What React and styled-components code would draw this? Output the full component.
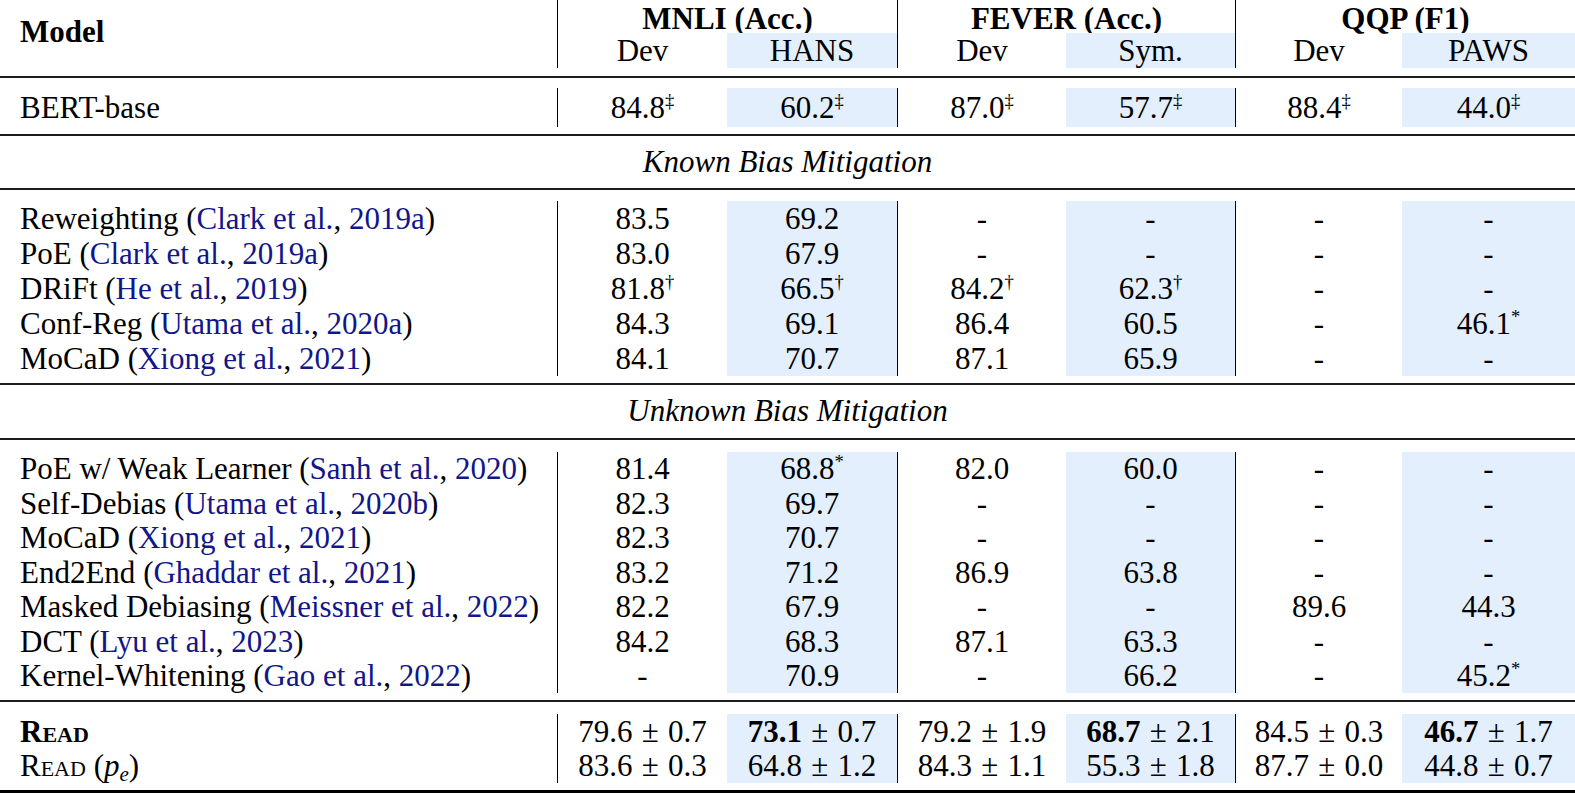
import React from "react";
import styled, { createGlobalStyle } from "styled-components";

const GlobalStyle = createGlobalStyle`
  html, body {
    margin: 0;
    padding: 0;
    background: #ffffff;
  }
  body {
    font-family: "Liberation Serif", "Times New Roman", serif;
    color: #000;
  }
`;

const COLS = "557px 170px 170px 169px 169px 167px 1fr";
const SHADE = "#e3effd";
const CITE = "#11168a";

const Page = styled.div`
  width: 1575px;
  font-size: 31px;
`;

const HeaderGrid = styled.div`
  display: grid;
  grid-template-columns: ${COLS};
  grid-template-rows: 33px 35px;
  margin-bottom: 8px;
`;

const Cell = styled.div`
  display: flex;
  align-items: center;
  justify-content: ${(p) => (p.$left ? "flex-start" : "center")};
  padding-left: ${(p) => (p.$left ? "20px" : "0")};
  background: ${(p) => (p.$shade ? SHADE : "transparent")};
  border-left: ${(p) => (p.$sep ? "1px solid #000" : "none")};
  font-weight: ${(p) => (p.$bold ? "bold" : "normal")};
  white-space: pre;
  line-height: 1;
`;

const ModelHead = styled(Cell)`
  grid-row: 1 / 3;
  padding-bottom: 6px;
`;

const GroupHead = styled(Cell)`
  grid-column: span 2;
  align-items: flex-start;
  padding-top: 3px;
`;

const Rule = styled.div`
  height: ${(p) => p.$h || 2}px;
  background: ${(p) => p.$color || "#1c1c1c"};
`;

const Section = styled.div`
  padding: ${(p) => p.$top}px 0 ${(p) => p.$bottom}px;
`;

const Row = styled.div`
  display: grid;
  grid-template-columns: ${COLS};
  height: ${(p) => p.$h}px;
`;

const GroupLabel = styled.div`
  height: ${(p) => p.$h}px;
  display: flex;
  align-items: center;
  justify-content: center;
  font-style: italic;
`;

const Cite = styled.span`
  color: ${CITE};
`;

const Sup = styled.sup`
  font-size: 0.6em;
  vertical-align: 0.6em;
  line-height: 0;
`;

const Sub = styled.sub`
  font-size: 0.68em;
  font-style: italic;
  vertical-align: -0.22em;
  line-height: 0;
`;

const Pm = styled.span`
  margin: 0 0.3em;
`;

const Method = styled.span`
  font-variant: small-caps;
  font-weight: ${(p) => (p.$bold ? "bold" : "normal")};
`;

const bert = [["84.8", "‡"], ["60.2", "‡"], ["87.0", "‡"], ["57.7", "‡"], ["88.4", "‡"], ["44.0", "‡"]];

const known = [
  { name: "Reweighting", cite: ["Clark et al.", "2019a"], vals: ["83.5", "69.2", "-", "-", "-", "-"] },
  { name: "PoE", cite: ["Clark et al.", "2019a"], vals: ["83.0", "67.9", "-", "-", "-", "-"] },
  { name: "DRiFt", cite: ["He et al.", "2019"], vals: [["81.8", "†"], ["66.5", "†"], ["84.2", "†"], ["62.3", "†"], "-", "-"] },
  { name: "Conf-Reg", cite: ["Utama et al.", "2020a"], vals: ["84.3", "69.1", "86.4", "60.5", "-", ["46.1", "*"]] },
  { name: "MoCaD", cite: ["Xiong et al.", "2021"], vals: ["84.1", "70.7", "87.1", "65.9", "-", "-"] },
];

const unknown = [
  { name: "PoE w/ Weak Learner", cite: ["Sanh et al.", "2020"], vals: ["81.4", ["68.8", "*"], "82.0", "60.0", "-", "-"] },
  { name: "Self-Debias", cite: ["Utama et al.", "2020b"], vals: ["82.3", "69.7", "-", "-", "-", "-"] },
  { name: "MoCaD", cite: ["Xiong et al.", "2021"], vals: ["82.3", "70.7", "-", "-", "-", "-"] },
  { name: "End2End", cite: ["Ghaddar et al.", "2021"], vals: ["83.2", "71.2", "86.9", "63.8", "-", "-"] },
  { name: "Masked Debiasing", cite: ["Meissner et al.", "2022"], vals: ["82.2", "67.9", "-", "-", "89.6", "44.3"] },
  { name: "DCT", cite: ["Lyu et al.", "2023"], vals: ["84.2", "68.3", "87.1", "63.3", "-", "-"] },
  { name: "Kernel-Whitening", cite: ["Gao et al.", "2022"], vals: ["-", "70.9", "-", "66.2", "-", ["45.2", "*"]] },
];

const readRows = [
  {
    label: <Method $bold>Read</Method>,
    vals: [["79.6", "0.7"], ["73.1", "0.7", true], ["79.2", "1.9"], ["68.7", "2.1", true], ["84.5", "0.3"], ["46.7", "1.7", true]],
  },
  {
    label: (
      <span>
        <Method>Read</Method> (<i>p</i>
        <Sub>e</Sub>)
      </span>
    ),
    vals: [["83.6", "0.3"], ["64.8", "1.2"], ["84.3", "1.1"], ["55.3", "1.8"], ["87.7", "0.0"], ["44.8", "0.7"]],
  },
];

// columns 1, 3, 5 are the shaded "out of distribution" sets, 0, 2, 4 start a group
const shadeOf = (i) => i % 2 === 1;
const sepOf = (i) => i % 2 === 0;

const Value = ({ v }) => {
  if (Array.isArray(v)) {
    return (
      <span>
        {v[0]}
        <Sup>{v[1]}</Sup>
      </span>
    );
  }
  return <span>{v}</span>;
};

const Name = ({ row }) => (
  <span>
    {row.name} (<Cite>{row.cite[0]}</Cite>, <Cite>{row.cite[1]}</Cite>)
  </span>
);

const DataRow = ({ label, vals, h }) => (
  <Row $h={h}>
    <Cell $left>{label}</Cell>
    {vals.map((v, i) => (
      <Cell key={i} $shade={shadeOf(i)} $sep={sepOf(i)}>
        <Value v={v} />
      </Cell>
    ))}
  </Row>
);

const PmRow = ({ label, vals, h }) => (
  <Row $h={h}>
    <Cell $left>{label}</Cell>
    {vals.map(([m, s, bold], i) => (
      <Cell key={i} $shade={shadeOf(i)} $sep={sepOf(i)}>
        <span>
          {bold ? <b>{m}</b> : m}
          <Pm>±</Pm>
          {s}
        </span>
      </Cell>
    ))}
  </Row>
);

const App = () => {
  return (
    <Page>
      <GlobalStyle />
      <HeaderGrid>
        <ModelHead $left $bold>Model</ModelHead>
        <GroupHead $sep $bold>MNLI (Acc.)</GroupHead>
        <GroupHead $sep $bold>FEVER (Acc.)</GroupHead>
        <GroupHead $sep $bold>QQP (F1)</GroupHead>
        {["Dev", "HANS", "Dev", "Sym.", "Dev", "PAWS"].map((t, i) => (
          <Cell key={t + i} $shade={shadeOf(i)} $sep={sepOf(i)}>
            {t}
          </Cell>
        ))}
      </HeaderGrid>
      <Rule />

      <Section $top={10} $bottom={7}>
        <DataRow label="BERT-base" vals={bert} h={39} />
      </Section>
      <Rule />

      <GroupLabel $h={52}>Known Bias Mitigation</GroupLabel>
      <Rule />
      <Section $top={10.5} $bottom={7}>
        {known.map((r) => (
          <DataRow key={r.name} label={<Name row={r} />} vals={r.vals} h={35.1} />
        ))}
      </Section>
      <Rule />

      <GroupLabel $h={53}>Unknown Bias Mitigation</GroupLabel>
      <Rule />
      <Section $top={11.6} $bottom={7}>
        {unknown.map((r) => (
          <DataRow key={r.name} label={<Name row={r} />} vals={r.vals} h={34.5} />
        ))}
      </Section>
      <Rule />

      <Section $top={12} $bottom={7}>
        {readRows.map((r, i) => (
          <PmRow key={i} label={r.label} vals={r.vals} h={34.5} />
        ))}
      </Section>
      <Rule $h={6} $color="#000" />
    </Page>
  );
};

export default App;
